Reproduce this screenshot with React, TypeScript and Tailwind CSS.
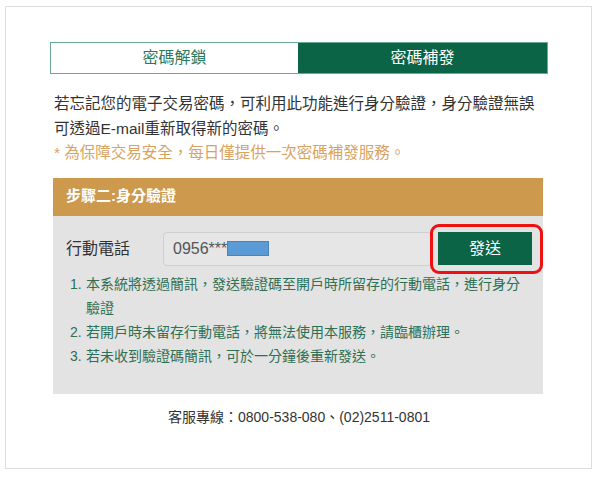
const FONT = "font-['Liberation_Sans','Noto_Sans_CJK_TC',sans-serif]";

const notes = [
  '本系統將透過簡訊，發送驗證碼至開戶時所留存的行動電話，進行身分驗證',
  '若開戶時未留存行動電話，將無法使用本服務，請臨櫃辦理。',
  '若未收到驗證碼簡訊，可於一分鐘後重新發送。',
];

const App = () => {
  return (
    <div className={`w-[600px] h-[479px] bg-white pt-[6px] pl-[5px] ${FONT}`}>
      <div className="w-[587px] h-[463px] border border-[#dddddd] pt-[35px] pl-[44px]">
        {/* Tabs */}
        <div className="flex w-[498px] h-[32px] border border-[#6aa893]">
          <div className="w-[247px] flex items-center justify-center text-[16px] text-[#2b7a5e] bg-white">
            密碼解鎖
          </div>
          <div className="flex-1 flex items-center justify-center text-[16px] text-white bg-[#0b6445]">
            密碼補發
          </div>
        </div>

        {/* Intro */}
        <div className="mt-[18px] pl-[4px] text-[15.5px] leading-[24.5px] text-[#333333]">
          <p>若忘記您的電子交易密碼，可利用此功能進行身分驗證，身分驗證無誤</p>
          <p>可透過E-mail重新取得新的密碼。</p>
          <p className="text-[#d9a262]">* 為保障交易安全，每日僅提供一次密碼補發服務。</p>
        </div>

        {/* Step panel */}
        <div className="mt-[12px] ml-[3px] w-[490px]">
          <div className="h-[38px] bg-[#cc994d] pl-[13px] flex items-center text-[15px] font-bold text-white">
            步驟二:身分驗證
          </div>
          <div className="h-[178px] bg-[#e3e3e3] pt-[16px]">
            <div className="flex items-center pl-[13px]">
              <div className="w-[97px] text-[16px] text-[#333333]">行動電話</div>
              <div className="w-[269px] h-[34px] rounded-[4px] border border-[#cfcfcf] bg-[#e6e6e6] flex items-center pl-[9px] text-[16px] text-[#555555]">
                0956***
                <span className="inline-block w-[42px] h-[15px] bg-[#5b9bd5] border border-[#4a84bb]"></span>
              </div>
              <div className="relative ml-[6px]">
                <button className="w-[94px] h-[33px] bg-[#0b6445] text-white text-[16px] flex items-center justify-center">
                  發送
                </button>
                <div className="absolute -left-[8px] -top-[8px] w-[113px] h-[50px] border-[3px] border-[#ee1111] rounded-[9px] pointer-events-none"></div>
              </div>
            </div>

            <div className="mt-[6px] pl-[17px] text-[14px] leading-[24px] text-[#2d7055]">
              {notes.map((t, i) => (
                <div key={i} className="flex">
                  <span className="w-[16px] shrink-0">{i + 1}.</span>
                  <span className="w-[440px]">{t}</span>
                </div>
              ))}
            </div>
          </div>
        </div>

        {/* Footer */}
        <div className="mt-[13px] w-[498px] text-center text-[14px] leading-[20px] text-[#333333]">
          客服專線：0800-538-080、(02)2511-0801
        </div>
      </div>
    </div>
  );
};

export default App;
